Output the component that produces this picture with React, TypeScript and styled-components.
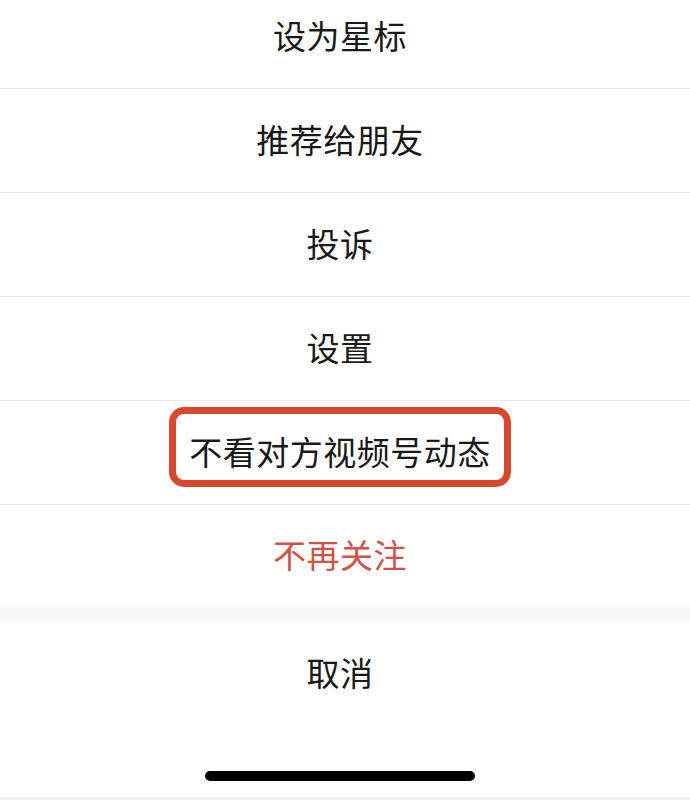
import styled, { createGlobalStyle } from 'styled-components';

const menuItems = [
	{ name: '设为星标' },
	{ name: '推荐给朋友' },
	{ name: '投诉' },
	{ name: '设置' },
	{ name: '不看对方视频号动态', marked: true },
	{ name: '不再关注', danger: true }
];

const GlobalStyle = createGlobalStyle`
	html, body {
		margin: 0;
		padding: 0;
		background: #ffffff;
	}
	body {
		font-family: "Noto Sans CJK SC", "Noto Sans", sans-serif;
		overflow: hidden;
	}
`;

function App() {
	return (
		<>
			<GlobalStyle />
			<Sheet>
				<MenuList>
					{menuItems.map((item, index) => (
						<MenuRow key={index}>
							{item.marked ? (
								<Highlight>
									<MenuText>{item.name}</MenuText>
								</Highlight>
							) : (
								<MenuText $danger={item.danger}>{item.name}</MenuText>
							)}
						</MenuRow>
					))}
				</MenuList>
				<Separator />
				<CancelArea>
					<CancelRow>
						<MenuText>取消</MenuText>
					</CancelRow>
					<HomeBar />
				</CancelArea>
			</Sheet>
		</>
	);
}

const Sheet = styled.div`
	width: 690px;
	height: 815px;
	margin-top: -15px;
	display: flex;
	flex-direction: column;
	background: #ffffff;
`;

const MenuList = styled.div`
	display: flex;
	flex-direction: column;
`;

const MenuRow = styled.div`
	box-sizing: border-box;
	height: 104px;
	padding: 0 10px 4px 0;
	display: flex;
	align-items: center;
	justify-content: center;
	border-bottom: 1px solid #ebebeb;

	&:last-child {
		border-bottom: none;
		height: 102px;
	}
`;

const MenuText = styled.span<{ $danger?: boolean }>`
	font-size: 33px;
	line-height: 40px;
	color: ${(p) => (p.$danger ? '#cc5346' : '#191919')};
	letter-spacing: 0.5px;
`;

const Highlight = styled.span`
	display: inline-flex;
	align-items: center;
	justify-content: center;
	height: 66px;
	padding: 0 13px;
	margin-top: -8px;
	border: 7px solid #d8472e;
	border-radius: 15px;

	${MenuText} {
		margin-top: 8px;
	}
`;

const Separator = styled.div`
	height: 16px;
	background: #f7f7f7;
`;

const CancelArea = styled.div`
	flex: 1;
	padding-right: 10px;
	display: flex;
	flex-direction: column;
	align-items: center;
	border-bottom: 3px solid #f0f0f0;
`;

const CancelRow = styled.div`
	box-sizing: border-box;
	width: 100%;
	height: 102px;
	padding-bottom: 5px;
	display: flex;
	align-items: center;
	justify-content: center;
`;

const HomeBar = styled.div`
	width: 270px;
	height: 10px;
	margin-top: 46px;
	border-radius: 5px;
	background: #000000;
`;

export default App;
